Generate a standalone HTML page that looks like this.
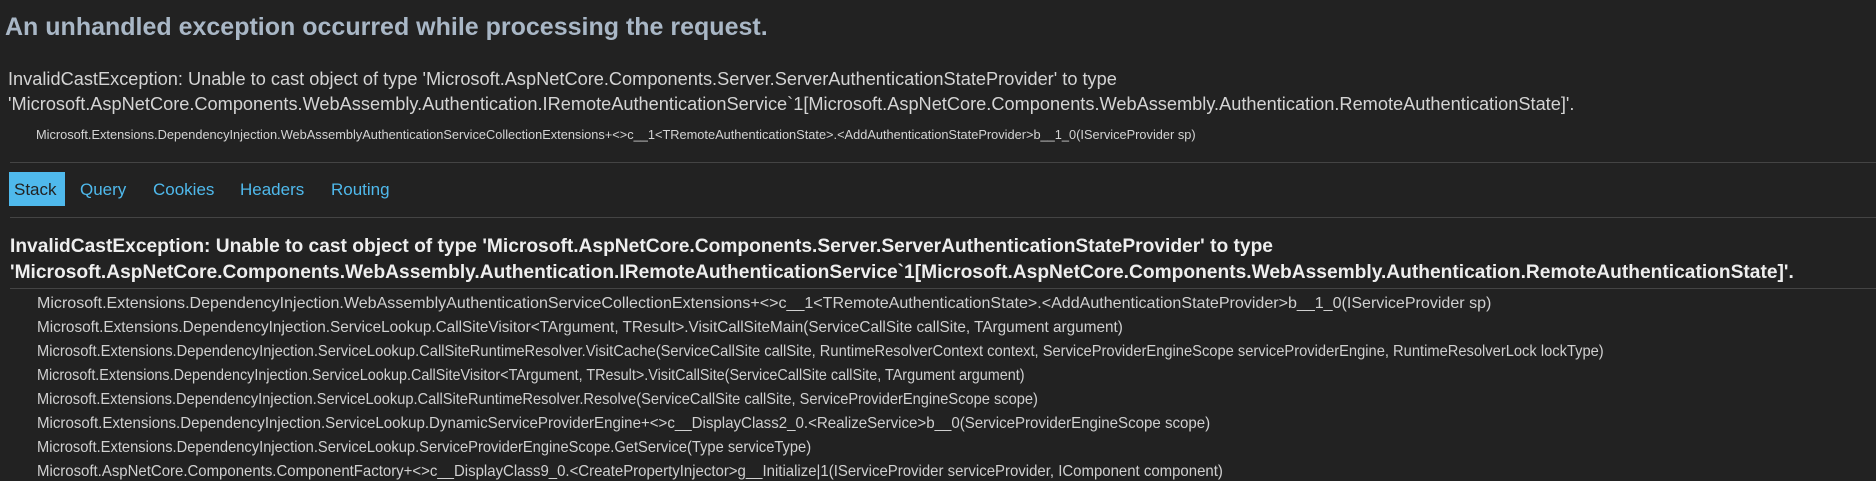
<!DOCTYPE html>
<html><head><meta charset="utf-8"><style>
html,body{margin:0;padding:0;background:#222;width:1876px;height:474px;overflow:hidden;font-family:"Liberation Sans",sans-serif;}
.a{position:absolute;white-space:nowrap;transform-origin:0 0;}
.hr{position:absolute;left:10px;right:0;height:1px;background:#444;}
.t{color:#a9b7c6;font-weight:bold;font-size:25px;left:5px;top:13px;}
.m{color:#d4d4d4;font-size:18.2px;left:8px;}
.f{color:#d4d4d4;font-size:12.8px;left:36px;top:127px;}
.tab{color:#4fb9ec;font-size:17px;top:180px;}
.h{color:#eee;font-weight:bold;font-size:19.2px;left:10px;}
.r{color:#d0d0d0;font-size:15.8px;left:37px;}
</style></head><body>
<div class="a t">An unhandled exception occurred while processing the request.</div>
<div class="a m" style="top:69px">InvalidCastException: Unable to cast object of type 'Microsoft.AspNetCore.Components.Server.ServerAuthenticationStateProvider' to type</div>
<div class="a m" style="top:94px">'Microsoft.AspNetCore.Components.WebAssembly.Authentication.IRemoteAuthenticationService`1[Microsoft.AspNetCore.Components.WebAssembly.Authentication.RemoteAuthenticationState]'.</div>
<div class="a f">Microsoft.Extensions.DependencyInjection.WebAssemblyAuthenticationServiceCollectionExtensions+&lt;&gt;c__1&lt;TRemoteAuthenticationState&gt;.&lt;AddAuthenticationStateProvider&gt;b__1_0(IServiceProvider sp)</div>
<div class="hr" style="top:162px"></div>
<div class="a" style="left:9px;top:172px;width:56px;height:34px;background:#4fb9ec;"></div>
<div class="a tab" style="left:14px;color:#222">Stack</div>
<div class="a tab" style="left:80px">Query</div>
<div class="a tab" style="left:153px">Cookies</div>
<div class="a tab" style="left:240px">Headers</div>
<div class="a tab" style="left:331px">Routing</div>
<div class="hr" style="top:217px"></div>
<div class="a h" style="top:236px">InvalidCastException: Unable to cast object of type 'Microsoft.AspNetCore.Components.Server.ServerAuthenticationStateProvider' to type</div>
<div class="a h" style="top:262px">'Microsoft.AspNetCore.Components.WebAssembly.Authentication.IRemoteAuthenticationService`1[Microsoft.AspNetCore.Components.WebAssembly.Authentication.RemoteAuthenticationState]'.</div>
<div class="hr" style="top:288px"></div>
<div class="a r" style="top:295px;transform:scaleX(1.016)">Microsoft.Extensions.DependencyInjection.WebAssemblyAuthenticationServiceCollectionExtensions+&lt;&gt;c__1&lt;TRemoteAuthenticationState&gt;.&lt;AddAuthenticationStateProvider&gt;b__1_0(IServiceProvider sp)</div>
<div class="a r" style="top:319px;transform:scaleX(0.97)">Microsoft.Extensions.DependencyInjection.ServiceLookup.CallSiteVisitor&lt;TArgument, TResult&gt;.VisitCallSiteMain(ServiceCallSite callSite, TArgument argument)</div>
<div class="a r" style="top:343px;transform:scaleX(0.93)">Microsoft.Extensions.DependencyInjection.ServiceLookup.CallSiteRuntimeResolver.VisitCache(ServiceCallSite callSite, RuntimeResolverContext context, ServiceProviderEngineScope serviceProviderEngine, RuntimeResolverLock lockType)</div>
<div class="a r" style="top:367px;transform:scaleX(0.91)">Microsoft.Extensions.DependencyInjection.ServiceLookup.CallSiteVisitor&lt;TArgument, TResult&gt;.VisitCallSite(ServiceCallSite callSite, TArgument argument)</div>
<div class="a r" style="top:391px;transform:scaleX(0.926)">Microsoft.Extensions.DependencyInjection.ServiceLookup.CallSiteRuntimeResolver.Resolve(ServiceCallSite callSite, ServiceProviderEngineScope scope)</div>
<div class="a r" style="top:415px;transform:scaleX(0.954)">Microsoft.Extensions.DependencyInjection.ServiceLookup.DynamicServiceProviderEngine+&lt;&gt;c__DisplayClass2_0.&lt;RealizeService&gt;b__0(ServiceProviderEngineScope scope)</div>
<div class="a r" style="top:439px;transform:scaleX(0.93)">Microsoft.Extensions.DependencyInjection.ServiceLookup.ServiceProviderEngineScope.GetService(Type serviceType)</div>
<div class="a r" style="top:463px;transform:scaleX(0.947)">Microsoft.AspNetCore.Components.ComponentFactory+&lt;&gt;c__DisplayClass9_0.&lt;CreatePropertyInjector&gt;g__Initialize|1(IServiceProvider serviceProvider, IComponent component)</div>
</body></html>
